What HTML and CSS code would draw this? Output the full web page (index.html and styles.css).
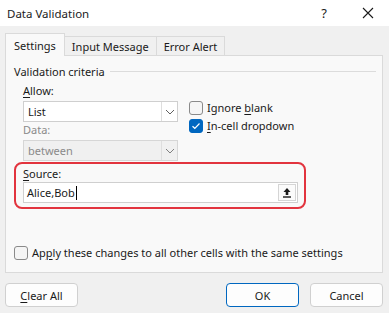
FILE: index.html
```html
<!DOCTYPE html>
<html>
<head>
<meta charset="utf-8">
<link rel="stylesheet" href="styles.css">
</head>
<body>
<div class="dialog">
  <div class="titlebar">
    <span class="title">Data Validation</span>
    <span class="tb-help">?</span>
    <span class="tb-close">
      <svg width="12" height="12" viewBox="0 0 12 12"><path d="M1 1 L11 11 M11 1 L1 11" stroke="#1a1a1a" stroke-width="1.1" fill="none"/></svg>
    </span>
  </div>
  <div class="tabs">
    <div class="tab active">Settings</div>
    <div class="tab">Input Message</div>
    <div class="tab">Error Alert</div>
  </div>
  <div class="panel">
    <div class="group-title"><span>Validation criteria</span></div>
    <div class="criteria">
      <div class="left-col">
        <div class="label"><u>A</u>llow:</div>
        <div class="select">
          <span class="sel-text">List</span>
          <span class="sel-btn"><svg width="10" height="6" viewBox="0 0 10 6"><path d="M1 1 L5 5 L9 1" stroke="#606060" stroke-width="1" fill="none"/></svg></span>
        </div>
        <div class="label disabled">Data:</div>
        <div class="select is-disabled">
          <span class="sel-text">between</span>
          <span class="sel-btn"><svg width="10" height="6" viewBox="0 0 10 6"><path d="M1 1 L5 5 L9 1" stroke="#808080" stroke-width="1" fill="none"/></svg></span>
        </div>
      </div>
      <div class="right-col">
        <div class="check"><span class="box"></span><span>Ignore <u>b</u>lank</span></div>
        <div class="check"><span class="box checked"><svg width="10" height="8" viewBox="0 0 10 8"><path d="M1.5 4.2 L3.8 6.3 L8.5 1.5" stroke="#fff" stroke-width="1.2" fill="none"/></svg></span><span><u>I</u>n-cell dropdown</span></div>
      </div>
    </div>
    <div class="source-box">
      <div class="label"><u>S</u>ource:</div>
      <div class="input">
        <span class="in-text">Alice,Bob</span><span class="caret"></span>
        <span class="up-btn"><svg width="10" height="11" viewBox="0 0 10 11"><path d="M5 1 L1.5 5 H3.7 V8 H6.3 V5 H8.5 Z" fill="#1a1a1a"/><rect x="1" y="9.3" width="8" height="1.4" fill="#1a1a1a"/></svg></span>
      </div>
    </div>
    <div class="spacer"></div>
    <div class="check apply"><span class="box"></span><span>Ap<u>p</u>ly these changes to all other cells with the same settings</span></div>
  </div>
  <div class="footer">
    <button class="btn"><u>C</u>lear All</button>
    <div class="grow"></div>
    <button class="btn default">OK</button>
    <button class="btn">Cancel</button>
  </div>
</div>
</body>
</html>
```
FILE: styles.css
```css
* { box-sizing: border-box; }
html, body { margin: 0; padding: 0; }
body {
  width: 389px;
  height: 313px;
  background: #f0f0f0;
  font-family: "Segoe UI", "Noto Sans", "Open Sans", sans-serif;
  font-size: 11px;
  color: #1a1a1a;
  overflow: hidden;
}
u { text-decoration: underline; text-underline-offset: 2px; text-decoration-thickness: 1px; }
.dialog { width: 389px; height: 313px; display: flex; flex-direction: column; }
.titlebar {
  height: 26px;
  background: #ffffff;
  display: flex;
  align-items: center;
  padding-left: 7px;
  font-size: 11.5px;
}
.title { flex: 1; }
.tb-help { width: 14px; margin-right: 31px; font-size: 13px; text-align: center; }
.tb-close { width: 12px; margin-right: 15px; display: flex; align-items: center; }
.tabs {
  display: flex;
  margin-top: 7px;
  padding-left: 5px;
  height: 22px;
  align-items: flex-end;
  position: relative;
  z-index: 1;
}
.tab {
  height: 19px;
  padding: 0 7px;
  border: 1px solid #dadada;
  border-bottom: none;
  border-left: none;
  background: #f0f0f0;
  display: flex;
  align-items: center;
  line-height: 1;
}
.tab.active {
  height: 23px;
  margin-bottom: -1px;
  background: #f9f9f9;
  border-left: 1px solid #dadada;
  padding: 0 8px 0 8px;
}
.panel {
  margin: 0 6px 0 5px;
  height: 218px;
  border: 1px solid #dadada;
  background: #f9f9f9;
  padding: 7px 6px 6px 8px;
  display: flex;
  flex-direction: column;
}
.group-title {
  display: flex;
  align-items: center;
  height: 16px;
}
.group-title::after {
  content: "";
  flex: 1;
  height: 1px;
  background: #dcdcdc;
  margin-left: 5px;
}
.criteria {
  display: flex;
  padding-left: 9px;
  margin-top: 4px;
}
.left-col { width: 155px; display: flex; flex-direction: column; }
.label { height: 16px; line-height: 16px; }
.label.disabled { color: #8a8a8a; }
.select {
  height: 21px;
  margin-top: 2px;
  background: #ffffff;
  border: 1px solid #cfcfcf;
  display: flex;
  align-items: center;
}
.select.is-disabled { background: #f0f0f0; color: #8a8a8a; border-color: #d6d6d6; }
.sel-text { flex: 1; padding-left: 4px; }
.sel-btn {
  width: 16px;
  height: 19px;
  border-left: 1px solid #dedede;
  display: flex;
  align-items: center;
  justify-content: center;
}
.right-col { margin-left: 11px; padding-top: 18px; display: flex; flex-direction: column; gap: 4px; }
.check { display: flex; align-items: center; gap: 4px; height: 14px; line-height: 14px; }
.box {
  width: 14px;
  height: 14px;
  border: 1px solid #8a8a8a;
  border-radius: 3px;
  background: #f5f5f5;
  display: flex;
  align-items: center;
  justify-content: center;
  flex: none;
}
.box.checked { background: #0067c0; border-color: #0067c0; }
.source-box {
  margin-top: 1px;
  width: 292px;
  height: 47px;
  border: 2px solid #e2343e;
  border-radius: 8px;
  padding: 2px 6px 0 7px;
}
.input {
  height: 21px;
  background: #ffffff;
  border: 1px solid #cfcfcf;
  display: flex;
  align-items: center;
  padding-left: 3px;
  margin-top: 0px;
}
.in-text { line-height: 1; }
.caret { width: 1px; height: 14px; background: #000; margin-left: 1px; }
.up-btn {
  margin-left: auto;
  margin-right: 1px;
  width: 18px;
  height: 17px;
  border: 1px solid #d5d5d5;
  background: #fbfbfb;
  display: flex;
  align-items: center;
  justify-content: center;
}
.spacer { flex: 1; }
.apply { margin-bottom: 6px; }
.footer {
  display: flex;
  padding: 10px 6px 0 5px;
  gap: 11px;
}
.grow { flex: 1; }
.btn {
  font-family: inherit;
  font-size: 11px;
  color: #1a1a1a;
  width: 73px;
  height: 24px;
  background: #fdfdfd;
  border: 1px solid #d0d0d0;
  border-radius: 4px;
  padding: 0;
}
.btn.default { border-color: #0067c0; }
```
